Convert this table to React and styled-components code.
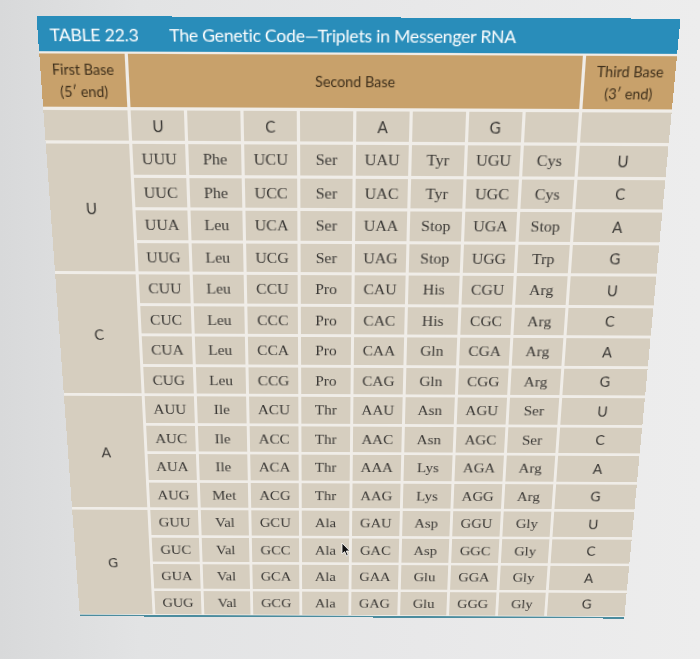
import React from 'react';
import styled, { createGlobalStyle } from 'styled-components';

const GlobalStyle = createGlobalStyle`
  html, body {
    margin: 0;
    padding: 0;
    background: #e4e4e5;
  }
`;

const BASES = ['U', 'C', 'A', 'G'];

const AMINO = {
  UUU: 'Phe', UUC: 'Phe', UUA: 'Leu', UUG: 'Leu',
  UCU: 'Ser', UCC: 'Ser', UCA: 'Ser', UCG: 'Ser',
  UAU: 'Tyr', UAC: 'Tyr', UAA: 'Stop', UAG: 'Stop',
  UGU: 'Cys', UGC: 'Cys', UGA: 'Stop', UGG: 'Trp',
  CUU: 'Leu', CUC: 'Leu', CUA: 'Leu', CUG: 'Leu',
  CCU: 'Pro', CCC: 'Pro', CCA: 'Pro', CCG: 'Pro',
  CAU: 'His', CAC: 'His', CAA: 'Gln', CAG: 'Gln',
  CGU: 'Arg', CGC: 'Arg', CGA: 'Arg', CGG: 'Arg',
  AUU: 'Ile', AUC: 'Ile', AUA: 'Ile', AUG: 'Met',
  ACU: 'Thr', ACC: 'Thr', ACA: 'Thr', ACG: 'Thr',
  AAU: 'Asn', AAC: 'Asn', AAA: 'Lys', AAG: 'Lys',
  AGU: 'Ser', AGC: 'Ser', AGA: 'Arg', AGG: 'Arg',
  GUU: 'Val', GUC: 'Val', GUA: 'Val', GUG: 'Val',
  GCU: 'Ala', GCC: 'Ala', GCA: 'Ala', GCG: 'Ala',
  GAU: 'Asp', GAC: 'Asp', GAA: 'Glu', GAG: 'Glu',
  GGU: 'Gly', GGC: 'Gly', GGA: 'Gly', GGG: 'Gly',
};

const Page = styled.div`
  position: relative;
  width: 700px;
  height: 659px;
  overflow: hidden;
  box-sizing: border-box;
  padding: 33px 0 0 60px;
  background: linear-gradient(90deg, #d8d9da 0%, #e2e3e4 20%, #e8e8e9 60%, #ededed 100%);
`;

// photo is taken at an angle, so the flat table is tilted back
const Table = styled.div`
  width: 590px;
  background: #f0ede8;
  border-bottom: 2px solid #4b8c9e;
  transform: perspective(1000px) rotateZ(0.25deg) rotateX(-15.7deg) skewX(-0.35deg);
  transform-origin: 50% 50%;
`;

const TitleBar = styled.div`
  height: 31px;
  display: flex;
  align-items: center;
  padding-left: 11px;
  background: #298dba;
  color: #ffffff;
  font-family: Lato, 'Open Sans', sans-serif;
  font-size: 16.2px;
  letter-spacing: -0.2px;
`;

const TitleNumber = styled.span`
  width: 110px;
  flex: none;
`;

const Grid = styled.div`
  display: grid;
  grid-template-columns: 79px repeat(8, 1fr) 84px;
  grid-template-rows: 48px 28px repeat(16, 28.5px);
  gap: 3px;
  padding: 2px 0 1px;
`;

const HeadCell = styled.div`
  grid-column: ${p => p.$span || 'auto'};
  display: flex;
  align-items: center;
  justify-content: center;
  text-align: center;
  background: #c8a16b;
  color: #3e2f1b;
  font-family: Lato, 'Open Sans', sans-serif;
  font-size: 13.4px;
  line-height: 1.5;
`;

const Cell = styled.div`
  grid-row: ${p => (p.$rows ? `span ${p.$rows}` : 'auto')};
  display: flex;
  align-items: center;
  justify-content: center;
  background: #d6cebf;
  color: ${p => (p.$serif ? '#3b3936' : '#3a3835')};
  font-family: ${p =>
    p.$serif ? "'Liberation Serif', 'Times New Roman', serif" : "Lato, 'Open Sans', sans-serif"};
  font-size: ${p => (p.$serif ? '15.5px' : '14.5px')};
`;

const Cursor = styled.svg`
  position: absolute;
  left: 341px;
  top: 542px;
`;

const App = () => {
  const rows = [];
  BASES.forEach(first => {
    BASES.forEach((third, i) => {
      if (i === 0) {
        rows.push(
          <Cell key={`f-${first}`} $rows={4}>
            {first}
          </Cell>
        );
      }
      BASES.forEach(second => {
        const codon = first + second + third;
        rows.push(
          <Cell key={`c-${codon}`} $serif>
            {codon}
          </Cell>
        );
        rows.push(
          <Cell key={`a-${codon}`} $serif>
            {AMINO[codon]}
          </Cell>
        );
      });
      rows.push(<Cell key={`t-${first}${third}`}>{third}</Cell>);
    });
  });

  return (
    <>
      <GlobalStyle />
      <Page>
        <Table>
          <TitleBar>
            <TitleNumber>TABLE 22.3</TitleNumber>
            The Genetic Code—Triplets in Messenger RNA
          </TitleBar>
          <Grid>
            <HeadCell>
              First Base
              <br />
              (5′ end)
            </HeadCell>
            <HeadCell $span="span 8">Second Base</HeadCell>
            <HeadCell>
              Third Base
              <br />
              (3′ end)
            </HeadCell>

            <Cell />
            {BASES.map(b => (
              <React.Fragment key={`h-${b}`}>
                <Cell>{b}</Cell>
                <Cell />
              </React.Fragment>
            ))}
            <Cell />

            {rows}
          </Grid>
        </Table>
        <Cursor width="10" height="15" viewBox="0 0 10 15">
          <path d="M1 1 L1 12 L3.6 9.6 L5.6 14 L7.2 13.3 L5.3 9 L8.8 9 Z" fill="#111" stroke="#fff" strokeWidth="0.8" />
        </Cursor>
      </Page>
    </>
  );
};

export default App;
